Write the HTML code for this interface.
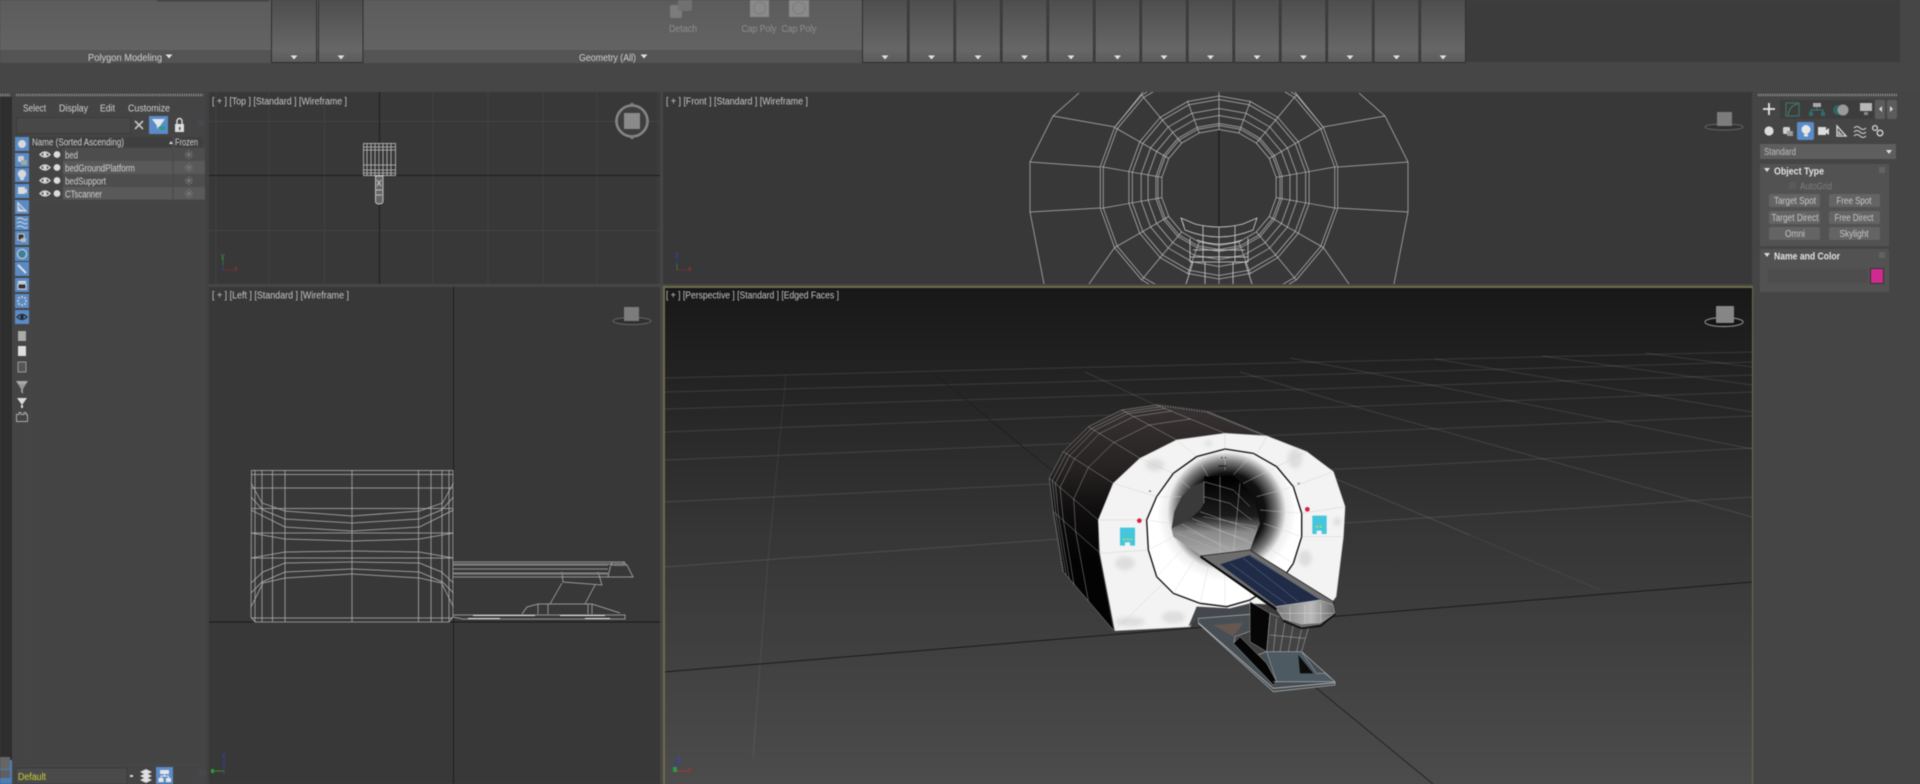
<!DOCTYPE html>
<html><head><meta charset="utf-8"><title>3ds Max</title>
<style>
html,body{margin:0;padding:0;background:#464646;width:1920px;height:784px;overflow:hidden}
svg{display:block;filter:blur(.4px)}
text{font-family:"Liberation Sans",sans-serif;font-size:10px;fill:#c8c8c8}
.w{fill:none;stroke:#b4b4b4;stroke-width:.75}
.g{stroke:#424242;stroke-width:1;fill:none}
.t{fill:#d2d2d2}
</style></head><body>
<svg width="1920" height="784" viewBox="0 0 1920 784" xmlns="http://www.w3.org/2000/svg">
<defs>
<linearGradient id="rib" x1="0" y1="0" x2="0" y2="1"><stop offset="0" stop-color="#5c5c5c"/><stop offset="1" stop-color="#636363"/></linearGradient>
<linearGradient id="btn" x1="0" y1="0" x2="0" y2="1"><stop offset="0" stop-color="#4d4d4d"/><stop offset=".8" stop-color="#676767"/><stop offset="1" stop-color="#5b5b5b"/></linearGradient>
<linearGradient id="per" x1="0" y1="0" x2="0" y2="1"><stop offset="0" stop-color="#181818"/><stop offset=".5" stop-color="#363636"/><stop offset="1" stop-color="#4c4c4c"/></linearGradient>
<linearGradient id="side" x1="0" y1="75" x2="0" y2="700" gradientUnits="userSpaceOnUse"><stop offset="0" stop-color="#383332"/><stop offset=".3" stop-color="#272323"/><stop offset=".5" stop-color="#100e0e"/><stop offset=".75" stop-color="#030303"/></linearGradient>
<radialGradient id="tun" gradientUnits="userSpaceOnUse" cx="680" cy="395" r="210"><stop offset="0" stop-color="#000"/><stop offset=".55" stop-color="#111"/><stop offset=".72" stop-color="#7c7c7c"/><stop offset=".85" stop-color="#eee"/><stop offset="1" stop-color="#fff"/></radialGradient>
<linearGradient id="stk" x1="0" y1="300" x2="0" y2="540" gradientUnits="userSpaceOnUse"><stop offset="0" stop-color="#020202"/><stop offset=".45" stop-color="#1c1c1c"/><stop offset=".65" stop-color="#8a8a8a"/><stop offset="1" stop-color="#b0b0b0"/></linearGradient>
<linearGradient id="capg" x1="0" y1="0" x2="1" y2="0"><stop offset="0" stop-color="#777"/><stop offset=".6" stop-color="#bbb"/><stop offset="1" stop-color="#666"/></linearGradient>
<filter id="bl" x="-30%" y="-30%" width="160%" height="160%"><feGaussianBlur stdDeviation="6"/></filter>
<polygon id="u" vector-effect="non-scaling-stroke" points="0,-1 .342,-.94 .643,-.766 .866,-.5 .985,-.174 .985,.174 .866,.5 .643,.766 .342,.94 0,1 -.342,.94 -.643,.766 -.866,.5 -.985,.174 -.985,-.174 -.866,-.5 -.643,-.766 -.342,-.94"/>
<path id="sp" vector-effect="non-scaling-stroke" d="M.342,-.94L.544,-1.495M.643,-.766L1.022,-1.218M.866,-.5L1.377,-.795M.985,-.174L1.566,-.277M.985,.174L1.566,.277M.866,.5L1.377,.795M.643,.766L1.022,1.218M.342,.94L.544,1.495M1.566,-.277L2.03,-.36M1.377,-.795L1.79,-1.03M1.022,-1.218L1.33,-1.59M1.566,.277L2.03,.36M1.377,.795L1.79,1.03M1.022,1.218L1.33,1.59"/>
<clipPath id="fc"><rect x="664" y="92" width="1088" height="192"/></clipPath>
<clipPath id="pc"><rect x="665" y="288" width="1087" height="496"/></clipPath>
<g id="arr"><rect x="-3" y="-2.5" width="6" height="1" fill="#eee"/><path d="M-2.4,-1.4H2.4L0,1.4Z" fill="#eee"/></g>
</defs>

<rect width="1920" height="784" fill="#464646"/>
<!-- ribbon -->
<rect width="1466" height="50" fill="url(#rib)"/>
<rect y="50" width="1466" height="13" fill="#545454"/>
<rect x="1466" width="434" height="62" fill="#3c3c3c"/>
<rect x="157" width="112" height="1.5" fill="#444"/>
<g fill="url(#btn)" stroke="#2f2f2f" stroke-width="1">
<rect x="271.5" y="-2" width="45" height="64.5"/><rect x="318.5" y="-2" width="44.5" height="64.5"/>
<rect x="862.5" y="-2" width="45" height="64.5"/><rect x="909" y="-2" width="45" height="64.5"/><rect x="955.5" y="-2" width="45" height="64.5"/><rect x="1002" y="-2" width="45" height="64.5"/><rect x="1048.5" y="-2" width="45" height="64.5"/><rect x="1095" y="-2" width="45" height="64.5"/><rect x="1141.5" y="-2" width="45" height="64.5"/><rect x="1188" y="-2" width="45" height="64.5"/><rect x="1234.5" y="-2" width="45" height="64.5"/><rect x="1281" y="-2" width="45" height="64.5"/><rect x="1327.5" y="-2" width="45" height="64.5"/><rect x="1374" y="-2" width="45" height="64.5"/><rect x="1420.5" y="-2" width="45" height="64.5"/>
</g>
<use href="#arr" x="294" y="58"/><use href="#arr" x="341" y="58"/>
<use href="#arr" x="885" y="58"/><use href="#arr" x="931.5" y="58"/><use href="#arr" x="978" y="58"/><use href="#arr" x="1024.5" y="58"/><use href="#arr" x="1071" y="58"/><use href="#arr" x="1117.5" y="58"/><use href="#arr" x="1164" y="58"/><use href="#arr" x="1210.5" y="58"/><use href="#arr" x="1257" y="58"/><use href="#arr" x="1303.5" y="58"/><use href="#arr" x="1350" y="58"/><use href="#arr" x="1396.5" y="58"/><use href="#arr" x="1443" y="58"/>
<text x="88" y="61" textLength="74" lengthAdjust="spacingAndGlyphs" class="t">Polygon Modeling</text>
<use href="#arr" x="169" y="57"/>
<text x="579" y="61" textLength="57" lengthAdjust="spacingAndGlyphs" class="t">Geometry (All)</text>
<use href="#arr" x="644" y="57"/>
<!-- detach / cap icons -->
<g fill="#7c7c7c"><rect x="670" y="5" width="12" height="13" rx="2"/><rect x="678" y="-1" width="14" height="12" rx="2" fill="#707070"/></g>
<rect x="750" y="0" width="19" height="17" fill="#8a8a8a"/><circle cx="759.5" cy="8" r="6" fill="none" stroke="#727272" stroke-dasharray="1.5 1"/>
<rect x="789" y="0" width="20" height="17" fill="#8a8a8a"/><circle cx="799" cy="8" r="6" fill="none" stroke="#727272" stroke-dasharray="1.5 1"/>
<g style="fill:#8e8e8e"><text x="683" y="32" text-anchor="middle" textLength="28" lengthAdjust="spacingAndGlyphs" style="fill:#8e8e8e">Detach</text>
<text x="759" y="32" text-anchor="middle" textLength="35" lengthAdjust="spacingAndGlyphs" style="fill:#8e8e8e">Cap Poly</text>
<text x="799" y="32" text-anchor="middle" textLength="35" lengthAdjust="spacingAndGlyphs" style="fill:#8e8e8e">Cap Poly</text></g>

<!-- viewports -->
<rect x="209" y="92" width="451" height="192" fill="#383838"/>
<rect x="663" y="92" width="1089" height="192" fill="#383838"/>
<rect x="209" y="287" width="451" height="497" fill="#383838"/>
<!-- top grid -->
<g class="g"><path d="M216,92V284M269,92V284M324.5,92V284M433,92V284M488,92V284M543,92V284M597,92V284M658,92V284M209,121.5H660M209,230.5H660"/></g>
<path d="M379.5,92V284M209,175.5H660" stroke="#1d1d1d" stroke-width="1" fill="none"/>
<!-- top object -->
<g fill="none" stroke="#c0c0c0" stroke-width=".8"><rect x="363.5" y="143.5" width="32" height="32"/><path d="M367,143V176M371,143V176M375,143V176M379,143V176M383,143V176M387,143V176M391,143V176M363,147H396M363,150H396M363,165H396M363,170H396M363,173H396"/></g>
<path d="M375.5,176H383V201Q383,204 379,204Q375.5,204 375.5,201Z" fill="#666" stroke="#ccc" stroke-width=".9"/>
<path d="M377,180L381,186M381,180L377,186M376,190H382M376,195H382" stroke="#ddd" stroke-width=".7" fill="none"/>
<!-- viewcube top -->
<circle cx="632" cy="121" r="15.5" fill="#3e3e3e" stroke="#858585" stroke-width="2.6"/>
<rect x="624" y="113" width="16" height="16" fill="#8a8a8a"/>
<g fill="#808080"><rect x="630.5" y="103" width="3" height="3"/><rect x="630.5" y="136" width="3" height="3"/><rect x="615" y="119.5" width="3" height="3"/><rect x="646" y="119.5" width="3" height="3"/></g>
<!-- labels -->
<text x="212" y="104.5" textLength="135" lengthAdjust="spacingAndGlyphs">[ + ] [Top ] [Standard ] [Wireframe ]</text>
<text x="666" y="104.5" textLength="142" lengthAdjust="spacingAndGlyphs">[ + ] [Front ] [Standard ] [Wireframe ]</text>
<text x="212" y="298.5" textLength="137" lengthAdjust="spacingAndGlyphs">[ + ] [Left ] [Standard ] [Wireframe ]</text>

<!-- axes -->
<g stroke-width="1" fill="none" opacity=".75"><path d="M223,270V258" stroke="#2e8b2e"/><path d="M223,270H233" stroke="#a82a2a" stroke-dasharray="2 1"/><path d="M223,270V265" stroke="#2a3bb0"/></g>
<text x="221" y="258" style="font-size:7px;fill:#3aa03a">y</text><text x="234" y="271" style="font-size:7px;fill:#b03030">x</text>
<g stroke-width="1" fill="none" opacity=".75"><path d="M677,270V258" stroke="#2a3bb0"/><path d="M677,270H687" stroke="#a82a2a" stroke-dasharray="2 1"/><path d="M677,270V264" stroke="#2e8b2e"/></g>
<text x="675" y="257" style="font-size:7px;fill:#3345cc">z</text><text x="688" y="271" style="font-size:7px;fill:#b03030">x</text>
<g stroke-width="1" fill="none"><path d="M224,771V759" stroke="#2a3bb0"/><path d="M224,771H214" stroke="#2e8b2e"/><path d="M224,771V774" stroke="#a82a2a"/></g>
<text x="222" y="758" style="font-size:7px;fill:#3345cc">z</text><rect x="211" y="769" width="3" height="4" fill="#2e9b3e"/>

<!-- front wire -->
<g clip-path="url(#fc)">
<path d="M1219,129V245" stroke="#1a1a1a" stroke-width="1.1"/>
<g class="w">
<use href="#u" transform="translate(1219,187.5) scale(58)"/>
<use href="#u" transform="translate(1219,187.5) scale(62)"/>
<use href="#u" transform="translate(1219,187.5) scale(64)"/>
<use href="#u" transform="translate(1219,187.5) scale(72)"/>
<use href="#u" transform="translate(1219,187.5) scale(79)"/>
<use href="#u" transform="translate(1219,187.5) scale(88)"/>
<use href="#u" transform="translate(1219,187.5) scale(91.5)"/>
<use href="#u" transform="translate(1219,187.5) scale(117.5)"/>
<use href="#u" transform="translate(1219,187.5) scale(120.5)"/>
<use href="#sp" transform="translate(1219,187.5) scale(58)"/>
<use href="#sp" transform="translate(1219,187.5) scale(-58,58)"/>
<path d="M1219,92V129M1219,245V284"/>
<path id="ow" d="M1079,93L1053,116L1030,162V212L1044,284M1053,116L1115,127M1030,162L1100,167M1030,212L1100,208M1089,284L1115,247M1115,127L1143,92"/>
<use href="#ow" transform="translate(2438,0) scale(-1,1)"/>
<path stroke="#d8d8d8" d="M1181,218L1185,230Q1219,244 1253,230L1257,218L1243,224Q1219,230 1195,224ZM1181,218L1184,226M1190,262V238M1248,262V238M1190,262H1248M1193,250H1245M1197,240Q1219,248 1242,240M1190,257H1248M1203,226V262M1219,227V262M1235,226V262M1193,262L1186,284M1245,262L1252,284M1205,262V284M1233,262V284"/>
</g></g>

<!-- left wire -->
<path d="M453.5,287V784M209,622H660" stroke="#1b1b1b" stroke-width="1" fill="none"/>
<g class="w">
<path d="M251.5,470.5H453V617L449,622H255L251,617ZM251,474.5H453M251,488H453M251,508.5H453M251,533H453M251,558H453M251,618H453"/>
<path d="M255,470V622M262,470V622M272.5,470V622M285,470V622M352,470V622M418.5,470V622M431,470V622M442,470V622M449,470V622"/>
<g id="lc"><path d="M251,483L262,503L285,511L352,516M251,497L263,510L285,519L352,523M251,510L285,527L352,531M251,533L285,539L352,541M251,558L285,552L352,551M251,583L263,572L285,563L352,562M251,593L262,582L285,572L352,569M251,607L263,583L285,578L352,574"/></g>
<use href="#lc" transform="translate(704.5,0) scale(-1,1)"/>
<path d="M453,562H625M453,564H612M453,569H608M453,573H608M453,577H633L627,565L623,562M608,577L611,564M612,562V565H624"/>
<path d="M562,572L563,582L602,585L598,572M562,583L550,604M595,585L585,604"/>
<path d="M522,614L527,607L538,604H592L620,613M538,604V614M548,604V614M588,604V614M592,604V614"/>
<path d="M453,615H625V619H463L453,617"/>
</g>
<path d="M613,563H624L627,566H614Z" fill="#777"/>
<path d="M473,615.5H535M560,615.5H605M468,618.5H500M585,618.5H610" stroke="#e4e4e4" stroke-width="1"/>
<path d="M453,565H608M453,574H608" stroke="#777" stroke-width="1.6"/>

<!-- viewcube left & front -->
<ellipse cx="632" cy="321" rx="19" ry="3.5" fill="#303030" stroke="#666" stroke-width="1"/><rect x="624" y="307" width="15" height="14" fill="#7c7c7c"/>
<ellipse cx="1724" cy="127" rx="19" ry="3" fill="#303030" stroke="#666" stroke-width="1"/><rect x="1717" y="112" width="15" height="14" fill="#7c7c7c"/>

<!-- perspective -->
<rect x="663" y="286" width="1090" height="498" fill="url(#per)"/>
<g clip-path="url(#pc)" fill="none">
<g stroke="#fff" stroke-opacity=".11" stroke-width="1">
<path d="M664,378L1060,368L1752,352M664,392L1060,382L1752,362M664,409L1060,397L1752,375M664,432L1060,417L1752,392M664,460L1060,444L1752,416M664,502L1050,484L1752,448M664,567L1060,539L1360,522L1752,497"/>
<path d="M1435,359L1752,412M1542,356L1752,385M1645,353L1752,367M1290,358L1360,371L1752,449M1240,372L1360,408L1752,517M1085,372L1160,407M1300,464L1360,489L1470,535"/>
</g>
<path d="M1470,535L1600,590" stroke="#fff" stroke-opacity=".06"/>
<path d="M786,375L768,560L753,757" stroke="#fff" stroke-opacity=".07"/>
<path d="M664,672L1060,639L1752,582" stroke="#1a1a1a" stroke-width="1"/>
<path d="M932,372L1433,784" stroke="#1f1f1f" stroke-width=".9"/>
</g>
<path d="M664,287H1753M1753,286V784M664,286V784" stroke="#6f6c47" stroke-width="2" fill="none"/>
<text x="666" y="298.5" textLength="173" lengthAdjust="spacingAndGlyphs">[ + ] [Perspective ] [Standard ] [Edged Faces ]</text>
<!-- persp viewcube -->
<ellipse cx="1724" cy="322" rx="19" ry="4.5" fill="#141414" stroke="#8c8c8c" stroke-width="1.2"/>
<rect x="1716" y="306" width="18" height="17" rx="1" fill="#868686"/>
<!-- persp axis -->
<g stroke-width="1" fill="none"><path d="M675,770L677,759" stroke="#2a3bc0"/><path d="M675,771H688" stroke="#b03030"/></g>
<rect x="673" y="767" width="4" height="5" fill="#2e9b3e"/>
<text x="677" y="761" style="font-size:7px;fill:#3345dd">z</text><text x="688" y="772" style="font-size:7px;fill:#c03030">x</text>

<!-- CT MODEL -->
<g transform="translate(1000,380) scale(.33333)">
<polygon points="148,295 190,215 265,140 365,90 470,75 620,95 790,165 675,160 530,180 420,235 340,310 295,420 295,515 340,750 190,575 160,395" fill="url(#side)"/>
<g fill="none" stroke="#b4b4b4" stroke-width="1.2">
<path d="M148,295L190,215L265,140L365,90L470,75M148,295L160,395L190,575L340,750"/>
<path d="M157,302L199,221L274,146L375,96L482,80M157,302L168,402L199,585"/>
<path d="M166,310L208,228L283,151L384,101L495,86M166,310L176,410L208,596"/>
<path d="M180,322L223,237L298,161L401,110L515,93M180,322L190,420L222,614"/>
<path d="M221,357L265,262L342,187L447,135L572,117M221,357L227,455L265,662"/>
<path d="M148,295L295,420M190,215L340,310M265,140L420,235M365,90L530,180M470,75L675,160M620,95L800,168M160,395L295,515"/>
<path d="M470,75L620,95L790,165" stroke-width="6" stroke="#6c6c6c" stroke-dasharray="4 4"/>
<path d="M160,395L190,575" stroke-width="6" stroke="#5c5c5c" stroke-dasharray="4 4"/>
</g>
<polygon points="295,420 340,310 420,235 530,180 675,160 800,168 920,215 1000,275 1035,380 1030,470 1008,650 985,680 750,670 690,685 590,680 570,740 345,752 300,520" fill="#f3f3f3" stroke="#ddd" stroke-width="2"/>
<g fill="#bdbdbd" opacity=".4" filter="url(#bl)">
<ellipse cx="465" cy="255" rx="28" ry="18"/><ellipse cx="885" cy="235" rx="22" ry="30"/><ellipse cx="375" cy="550" rx="30" ry="20"/><ellipse cx="915" cy="535" rx="20" ry="24"/><ellipse cx="390" cy="725" rx="45" ry="14"/><ellipse cx="520" cy="712" rx="35" ry="18"/><ellipse cx="1012" cy="425" rx="12" ry="12"/><ellipse cx="625" cy="190" rx="12" ry="8"/>
</g>
<g fill="none" stroke="#d0d0d0" stroke-width="1.4">
<path d="M340,310L470,350M295,420L440,420M300,520L445,510M345,750L490,610M675,160V207M800,168L770,225M420,235L520,280M1000,275L880,320M1035,380L905,400M1030,470L905,470M530,180L590,230M920,215L830,260"/>
</g>
<polygon points="440,420 470,350 520,280 590,230 675,207 760,220 830,260 880,320 905,400 905,470 880,550 845,600 750,660 680,680 600,670 520,640 470,590 445,510" fill="url(#tun)" stroke="#0a0a0a" stroke-width="4"/>
<g fill="none" stroke="#d4d4d4" stroke-width="1.2">
<path d="M445,510L520,470M470,590L545,510M520,640L585,535M600,670L625,560M675,678V555M750,655V545M880,550L800,500M905,470L790,430M905,400L780,390M880,320L770,350M830,260L730,310M760,220L700,285M675,207V270M590,230L625,290M520,280L570,325M470,350L545,350M440,420L515,430"/>
</g>
<polygon points="612,290 700,285 760,345 780,430 750,510 660,540 600,525 520,470 515,445 545,430 600,390 612,370" fill="url(#stk)"/>
<polygon points="515,445 523,395 545,350 575,320 612,305 612,370 600,390 575,412 545,430" fill="#3a3a3a"/>
<g fill="none" stroke="#cacaca" stroke-width="1.2">
<path d="M612,305L700,330L750,380M612,350L690,370L755,420M600,395L760,450M575,415L755,490M545,432L705,520M660,290V540M720,310L700,520M612,305V370"/>
</g>
<g stroke="#b5b5b5" stroke-width="1.5" opacity=".8"><path d="M530,460L680,520M560,450L710,510M590,430L745,480M610,410L770,440"/></g>
<path d="M655,258H680M664,233h3M675,233h3" stroke="#222" stroke-width="4" fill="none"/>
<rect x="447" y="331" width="6" height="5" fill="#888"/><rect x="893" y="308" width="6" height="5" fill="#888"/>
<circle cx="418" cy="422" r="7" fill="#d8203a"/><circle cx="922" cy="388" r="7" fill="#d8203a"/>
<path d="M360,443H405V497H390V487H375V497H360Z" fill="#45c6dc"/><path d="M937,407H980V462H965V452H950V462H937Z" fill="#45c6dc"/>
<path d="M370,478H396M948,440H970" stroke="#c9d95a" stroke-width="5" stroke-dasharray="6 5"/>
<!-- gap under ring -->
<polygon points="590,680 690,685 750,670 760,705 595,715 565,740" fill="#44484c"/>
<!-- base plate -->
<polygon points="595,715 750,703 762,750 705,770 702,790 745,835 800,815 905,815 1005,905 1005,915 820,935 595,730" fill="#474f54" stroke="#ccc" stroke-width="1.6"/>
<polygon points="640,735 730,728 700,770" fill="#665850"/>
<polygon points="700,790 720,770 800,850 830,905 820,915" fill="#050505" stroke="#bbb" stroke-width="1.4"/>
<path d="M597,730L820,925M820,905H1005M820,925L1005,908" stroke="#dedede" stroke-width="1.8" fill="none"/>
<polygon points="905,815 950,880 975,880 1005,905 830,905 800,815" fill="#4e5a62" stroke="#bbb" stroke-width="1.4"/>
<polygon points="895,825 940,880 900,880" fill="#0c0c0c"/>
<!-- column -->
<polygon points="750,665 810,700 800,815 750,785" fill="#060606" stroke="#aaa" stroke-width="1.4"/>
<polygon points="810,700 925,745 905,815 800,815" fill="#434343" stroke="#bbb" stroke-width="1.4"/>
<path d="M830,715L820,815M855,725L840,815M880,735L865,815M905,745L890,815M810,765L915,775" stroke="#c4c4c4" stroke-width="1.3" fill="none"/>
<!-- bed -->
<polygon points="602,528 750,510 1000,665 1006,700 962,735 900,745 850,725 826,690 650,565" fill="#6d6d6d" stroke="#1e1e1e" stroke-width="2.5"/>
<polygon points="660,553 750,525 960,658 828,678" fill="#1f2b47"/>
<path d="M690,550L860,672M730,535L895,665M750,527L955,655" stroke="#7e8799" stroke-width="1.3" fill="none"/>
<path d="M602,530L830,688" stroke="#050505" stroke-width="6"/>
<polygon points="828,680 960,660 1000,675 1005,700 962,728 905,732 850,715" fill="url(#capg)" stroke="#ccc" stroke-width="1.4"/>
<path d="M870,680V725M915,675V730M962,668V725M840,700H1000" stroke="#dedede" stroke-width="1.3" fill="none"/>
<path d="M850,722L905,745L962,738L1006,702" stroke="#111" stroke-width="5" fill="none"/>
</g>

<!-- left strip & scene explorer -->
<rect y="97" width="12" height="687" fill="#2e2e2e"/>
<rect x="12" y="92" width="193" height="692" fill="#444"/>
<rect x="205" y="92" width="4" height="692" fill="#414141"/>
<path d="M0,95H10M16,95H203" stroke="#888" stroke-width="2.5" stroke-dasharray="1.3 1"/>
<rect x="0" y="760" width="12" height="24" fill="#4b7fb8"/><rect x="0" y="757" width="10" height="12" fill="#666"/><rect x="0" y="770" width="10" height="8" fill="#5f5f5f"/>
<text x="23" y="111.5" textLength="23" lengthAdjust="spacingAndGlyphs" class="t">Select</text>
<text x="59" y="111.5" textLength="29" lengthAdjust="spacingAndGlyphs" class="t">Display</text>
<text x="100" y="111.5" textLength="15" lengthAdjust="spacingAndGlyphs" class="t">Edit</text>
<text x="128" y="111.5" textLength="42" lengthAdjust="spacingAndGlyphs" class="t">Customize</text>
<rect x="16.5" y="117.5" width="114" height="16" fill="#484848" stroke="#3c3c3c"/>
<path d="M135,121L143,129M143,121L135,129" stroke="#c4c4c4" stroke-width="1.6"/>
<rect x="149" y="116" width="19" height="18" fill="#5b8bc8"/>
<path d="M152,119H165L160,126V130L157,128V126Z" fill="#dfe6ee"/><ellipse cx="162" cy="128" rx="4" ry="2" fill="#2b9a8a"/>
<rect x="175" y="124" width="9" height="8" fill="#ddd"/><path d="M177,124V121a2.5,2.5 0 0 1 5,0V124" fill="none" stroke="#ddd" stroke-width="1.4"/><rect x="179" y="127" width="1.4" height="3" fill="#444"/>
<path d="M198,120L201,123L198,126M201,120L204,123L201,126" stroke="#4a4f60" stroke-width="1" fill="none"/>
<rect x="31" y="137" width="172" height="10" fill="#3f3f3f"/>
<rect x="173" y="137" width="1" height="11" fill="#555"/>
<text x="32" y="145.5" textLength="92" lengthAdjust="spacingAndGlyphs" class="t">Name (Sorted Ascending)</text>
<path d="M169,144H173L171,141Z" fill="#ddd"/>
<text x="175" y="145.5" textLength="23" lengthAdjust="spacingAndGlyphs" class="t">Frozen</text>
<rect x="63" y="148" width="142" height="13" fill="#4d4d4d"/><rect x="63" y="161" width="142" height="13" fill="#595959"/><rect x="63" y="174" width="142" height="13" fill="#4d4d4d"/><rect x="63" y="187" width="142" height="13" fill="#595959"/>
<path d="M173,148V200" stroke="#484848"/>
<g class="t">
<text x="65" y="158.5" textLength="13" lengthAdjust="spacingAndGlyphs" class="t">bed</text>
<text x="65" y="171.5" textLength="70" lengthAdjust="spacingAndGlyphs" class="t">bedGroundPlatform</text>
<text x="65" y="184.5" textLength="41" lengthAdjust="spacingAndGlyphs" class="t">bedSupport</text>
<text x="65" y="197.5" textLength="37" lengthAdjust="spacingAndGlyphs" class="t">CTscanner</text>
</g>
<g id="eye"><path d="M40,154.5Q45,149.5 50,154.5Q45,159.5 40,154.5Z" fill="none" stroke="#ddd" stroke-width="1.3"/><circle cx="45" cy="154.5" r="1.8" fill="#ddd"/><circle cx="57" cy="154.5" r="3.4" fill="#dcdcdc"/><path d="M189,150V159.5M184.5,154.7H193.5M186,152L192,157.5M192,152L186,157.5" stroke="#777" stroke-width="1.2" stroke-dasharray="1.5 .7"/></g>
<use href="#eye" y="13"/><use href="#eye" y="26"/><use href="#eye" y="39"/>
<!-- filter buttons -->
<g fill="#5a8bc6"><rect x="15" y="137" width="14" height="14"/><rect x="15" y="153" width="14" height="14"/><rect x="15" y="168" width="14" height="14"/><rect x="15" y="184" width="14" height="14"/><rect x="15" y="200" width="14" height="14"/><rect x="15" y="216" width="14" height="14"/><rect x="15" y="231" width="14" height="14"/><rect x="15" y="247" width="14" height="14"/><rect x="15" y="262" width="14" height="14"/><rect x="15" y="278" width="14" height="14"/><rect x="15" y="294" width="14" height="14"/><rect x="15" y="310" width="14" height="14"/></g>
<circle cx="22" cy="144" r="4" fill="#d8d8d8"/>
<rect x="18" y="156" width="6" height="6" rx="1" fill="#d0d0d0"/><rect x="21" y="160" width="6" height="5" fill="#9aa"/>
<circle cx="22" cy="174" r="4.2" fill="#d8d8d8"/><rect x="20" y="178" width="4" height="2" fill="#d8d8d8"/>
<rect x="18" y="187" width="7" height="7" fill="#dcdcdc"/><path d="M25,190L27,188V194L25,192Z" fill="#dcdcdc"/>
<path d="M18,203V211H26ZM19.5,207V210H23" fill="none" stroke="#dcdcdc" stroke-width="1.2"/>
<path d="M17,219Q20,217 23,219T27,219M17,223Q20,221 23,223T27,223M17,227Q20,225 23,227T27,227" stroke="#d8d8d8" fill="none"/>
<rect x="18" y="234" width="6" height="6" fill="#333" stroke="#ccc"/><rect x="21" y="238" width="5" height="4" fill="#bbb"/>
<circle cx="22" cy="254" r="4.5" fill="#3f7f99" stroke="#ddd"/>
<path d="M18,265L26,273" stroke="#ddd" stroke-width="2"/>
<rect x="18" y="281" width="8" height="2" fill="#ddd"/><rect x="18" y="284" width="8" height="5" fill="#333" stroke="#ddd"/>
<g fill="#cfcfcf"><circle cx="22" cy="297" r="1"/><circle cx="22" cy="305" r="1"/><circle cx="18" cy="301" r="1"/><circle cx="26" cy="301" r="1"/><circle cx="19" cy="298" r="1"/><circle cx="25" cy="298" r="1"/><circle cx="19" cy="304" r="1"/><circle cx="25" cy="304" r="1"/></g>
<path d="M17,317Q22,312 27,317Q22,322 17,317Z" fill="none" stroke="#222" stroke-width="1.2"/><circle cx="22" cy="317" r="1.8" fill="#222"/>
<rect x="18" y="331" width="8" height="10" fill="#aaa"/><rect x="18" y="346" width="8" height="10" fill="#ddd"/><rect x="18" y="362" width="8" height="10" fill="#555" stroke="#999"/>
<path d="M16,381H28L26,384H18Z" fill="#aaa"/><path d="M18,384H26L23,389V394L21,392V389Z" fill="#999"/>
<path d="M17,398H27L22,405Z" fill="#ddd"/><rect x="21" y="405" width="2" height="3" fill="#ddd"/>
<path d="M16.5,421.5V414.5H19V412.5H21V414.5H24V412.5H26V414.5H27.5V421.5Z" fill="none" stroke="#aaa"/>
<!-- bottom -->
<rect x="30.5" y="200" width="174" height="565" fill="none" stroke="#484848"/>
<rect x="16" y="768" width="111" height="16" fill="#4a4a4a" stroke="#3b3b3b"/>
<text x="18" y="780" textLength="28" lengthAdjust="spacingAndGlyphs" style="fill:#c8d43a">Default</text>
<rect x="130" y="775" width="3" height="2" fill="#ddd"/>
<path d="M140,772L146,769L152,772L146,775ZM140,776L146,773L152,776L146,779ZM140,780L146,777L152,780L146,783Z" fill="#e0e0e0"/>
<rect x="156" y="767" width="17" height="17" fill="#5b8bc8"/>
<rect x="160" y="770" width="9" height="4" fill="#e6e6e6"/><rect x="158.5" y="778" width="5" height="4" fill="#e6e6e6"/><rect x="166" y="778" width="5" height="4" fill="#e6e6e6"/><path d="M164.5,774V777M161,778V776H168.5V778" stroke="#e6e6e6" fill="none"/>
<path d="M199,769L202,773L199,777M203,769L206,773L203,777" stroke="#4a4f60" fill="none"/>

<!-- command panel -->
<rect x="1753" y="92" width="167" height="692" fill="#454545"/>
<path d="M1758,95H1897" stroke="#8a8a8a" stroke-width="2.5" stroke-dasharray="1.3 1"/>
<path d="M1763,109H1775M1769,103V115" stroke="#e6e6e6" stroke-width="1.8"/>
<rect x="1780" y="100" width="94" height="19" fill="#3d3d3d"/>
<rect x="1786" y="103" width="13" height="13" fill="none" stroke="#3d6a66" stroke-width="1.4"/><path d="M1788,115Q1790,105 1798,104" stroke="#6fa" stroke-opacity=".35" fill="none"/>
<rect x="1813" y="103" width="8" height="4" fill="#aaa"/><path d="M1817,107V110M1811,113V110H1823V113" stroke="#3b7a76" fill="none"/><rect x="1809" y="112" width="4" height="4" fill="#2f6d6a"/><rect x="1821" y="112" width="4" height="4" fill="#2f6d6a"/>
<circle cx="1838" cy="110" r="5" fill="#2f6663"/><circle cx="1843" cy="110" r="5.5" fill="#9a9a9a"/>
<rect x="1860" y="103" width="12" height="8" fill="#b8b8b8"/><rect x="1864" y="112" width="4" height="3" fill="#888"/>
<rect x="1875" y="100" width="10" height="19" rx="2" fill="#5c5c5c"/><rect x="1887" y="100" width="10" height="19" rx="2" fill="#5c5c5c"/>
<path d="M1882,106V112L1879,109Z" fill="#ddd"/><path d="M1890,106V112L1893,109Z" fill="#ddd"/>
<circle cx="1769" cy="131" r="4.6" fill="#dcdcdc"/>
<rect x="1783" y="127" width="7" height="7" rx="1.5" fill="#d0d0d0"/><rect x="1787" y="131" width="6" height="5" fill="#9a9a9a"/>
<rect x="1797" y="122" width="17" height="18" rx="2" fill="#5b8bc8"/><circle cx="1806" cy="129.5" r="4.5" fill="#e6e6e6"/><rect x="1804" y="134" width="4" height="2.5" fill="#e6e6e6"/>
<rect x="1818" y="127" width="8" height="8" fill="#dcdcdc"/><path d="M1826,130L1829,128V135L1826,133Z" fill="#dcdcdc"/>
<path d="M1837,126V136H1846ZM1839,131V134H1842" fill="none" stroke="#dcdcdc" stroke-width="1.3"/>
<path d="M1854,128Q1857,125 1860,128T1866,128M1854,132Q1857,129 1860,132T1866,132M1854,136Q1857,133 1860,136T1866,136" stroke="#d8d8d8" fill="none"/>
<circle cx="1875" cy="128" r="2.4" fill="none" stroke="#d8d8d8" stroke-width="1.3"/><circle cx="1880" cy="133" r="2.8" fill="none" stroke="#d8d8d8" stroke-width="1.3"/>
<rect x="1760" y="144" width="136" height="15" fill="#5e5e5e"/>
<text x="1764" y="155" textLength="32" lengthAdjust="spacingAndGlyphs" style="fill:#c0c0c0">Standard</text>
<path d="M1886,150H1892L1889,154Z" fill="#ddd"/>
<rect x="1760" y="164" width="129" height="82" fill="#525252"/>
<path d="M1764,168H1770L1767,172Z" fill="#ddd"/>
<text x="1774" y="174.5" textLength="50" lengthAdjust="spacingAndGlyphs" style="font-weight:bold;fill:#e4e4e4">Object Type</text>
<rect x="1879" y="167" width="6" height="6" fill="#626262"/>
<rect x="1789" y="182" width="7" height="7" fill="#5a5a5a"/>
<text x="1800" y="189.5" textLength="32" lengthAdjust="spacingAndGlyphs" style="fill:#7e7e7e">AutoGrid</text>
<g fill="#646464"><rect x="1769" y="194" width="51" height="13" rx="2"/><rect x="1829" y="194" width="51" height="13" rx="2"/><rect x="1769" y="211" width="51" height="13" rx="2"/><rect x="1829" y="211" width="51" height="13" rx="2"/><rect x="1769" y="227" width="51" height="13" rx="2"/><rect x="1829" y="227" width="51" height="13" rx="2"/></g>
<text x="1795" y="204" text-anchor="middle" textLength="42" lengthAdjust="spacingAndGlyphs">Target Spot</text>
<text x="1854" y="204" text-anchor="middle" textLength="35" lengthAdjust="spacingAndGlyphs">Free Spot</text>
<text x="1795" y="221" text-anchor="middle" textLength="47" lengthAdjust="spacingAndGlyphs">Target Direct</text>
<text x="1854" y="221" text-anchor="middle" textLength="39" lengthAdjust="spacingAndGlyphs">Free Direct</text>
<text x="1795" y="237" text-anchor="middle" textLength="20" lengthAdjust="spacingAndGlyphs">Omni</text>
<text x="1854" y="237" text-anchor="middle" textLength="29" lengthAdjust="spacingAndGlyphs">Skylight</text>
<rect x="1760" y="249" width="129" height="43" fill="#525252"/>
<path d="M1764,253H1770L1767,257Z" fill="#ddd"/>
<text x="1774" y="259.5" textLength="66" lengthAdjust="spacingAndGlyphs" style="font-weight:bold;fill:#e4e4e4">Name and Color</text>
<rect x="1879" y="252" width="6" height="6" fill="#626262"/>
<rect x="1768" y="269" width="100" height="14" fill="#4d4d4d"/>
<rect x="1870.5" y="268.5" width="13" height="15" fill="#cf2a8f" stroke="#333"/>
</svg>
</body></html>
